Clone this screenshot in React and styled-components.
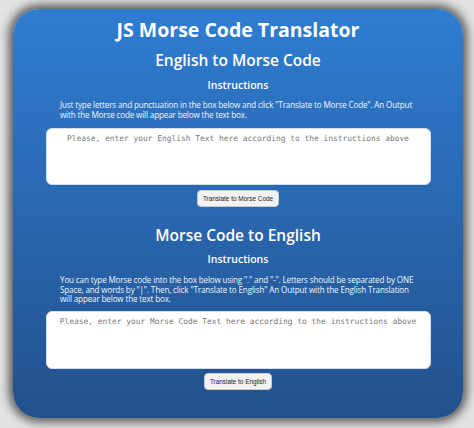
import React from "react";
import styled, { createGlobalStyle } from "styled-components";

const Global = createGlobalStyle`
  html, body {
    margin: 0;
    padding: 0;
    background: #e4e4e4;
  }
  body {
    font-family: "Open Sans", "Liberation Sans", sans-serif;
  }
`;

// Фон сторінки навколо картки
const Page = styled.div`
  width: 474px;
  height: 428px;
  padding: 9px 11px 10px 13px;
  box-sizing: border-box;
  background: #e2e2e2;
`;

// Синя картка з градієнтом і тінню
const Card = styled.main`
  height: 100%;
  border-radius: 26px;
  background: linear-gradient(180deg, #2f7dd1 0%, #2a69b4 45%, #22518b 100%);
  box-shadow: 0 0 10px 4px rgba(40, 40, 40, 0.75);
  display: flex;
  flex-direction: column;
  align-items: center;
  padding-top: 7px;
  box-sizing: border-box;
  color: #fff;
`;

// Головний заголовок
const Title = styled.h1`
  margin: 0;
  font-size: 19.5px;
  font-weight: 700;
  line-height: 28px;
`;

// Заголовок розділу
const Heading = styled.h2`
  margin: ${(p) => p.$top}px 0 0;
  font-size: 15.5px;
  font-weight: 600;
  line-height: 20px;
`;

const Sub = styled.h3`
  margin: ${(p) => p.$top}px 0 0;
  font-size: 10.5px;
  font-weight: 600;
  line-height: 14px;
`;

// Текст інструкцій
const Text = styled.p`
  margin: ${(p) => p.$top}px 0 0;
  width: 356px;
  font-size: 8.1px;
  font-weight: 500;
  line-height: 9.5px;
  letter-spacing: -0.15px;
  text-align: left;
  color: #f2f6fb;
`;

const Area = styled.textarea`
  margin-top: ${(p) => p.$top}px;
  width: 385px;
  height: ${(p) => p.$h}px;
  box-sizing: border-box;
  border: 1px solid #d4dde8;
  border-radius: 6px;
  background: #fff;
  resize: none;
  padding: 4px 6px;
  font-family: "DejaVu Sans Mono", "Liberation Mono", monospace;
  font-size: 7.9px;
  line-height: 11px;
  text-align: center;
  outline: none;
  &::placeholder {
    color: #777;
  }
`;

const Button = styled.button`
  margin-top: ${(p) => p.$top}px;
  height: 17px;
  padding: 0 5px;
  border: 1px solid #c9c9c9;
  border-radius: 4px;
  background: #f2f2f2;
  font-family: "Liberation Sans", Arial, sans-serif;
  font-size: 6.4px;
  color: #222;
  cursor: pointer;
`;

export default function App() {
  return (
    <Page>
      <Global />
      <Card>
        <Title>JS Morse Code Translator</Title>
        <Heading $top={6}>English to Morse Code</Heading>
        <Sub $top={8}>Instructions</Sub>
        <Text $top={8}>
          Just type letters and punctuation in the box below and click "Translate to Morse Code". An Output
          with the Morse code will appear below the text box.
        </Text>
        <Area $top={9} $h={57} placeholder="Please, enter your English Text here according to the instructions above" />
        <Button $top={5}>Translate to Morse Code</Button>

        <Heading $top={18}>Morse Code to English</Heading>
        <Sub $top={7}>Instructions</Sub>
        <Text $top={9}>
          You can type Morse code into the box below using "." and "-". Letters should be separated by ONE
          Space, and words by "|". Then, click "Translate to English" An Output with the English Translation
          will appear below the text box.
        </Text>
        <Area $top={7} $h={58} placeholder="Please, enter your Morse Code Text here according to the instructions above" />
        <Button $top={4}>Translate to English</Button>
      </Card>
    </Page>
  );
}
